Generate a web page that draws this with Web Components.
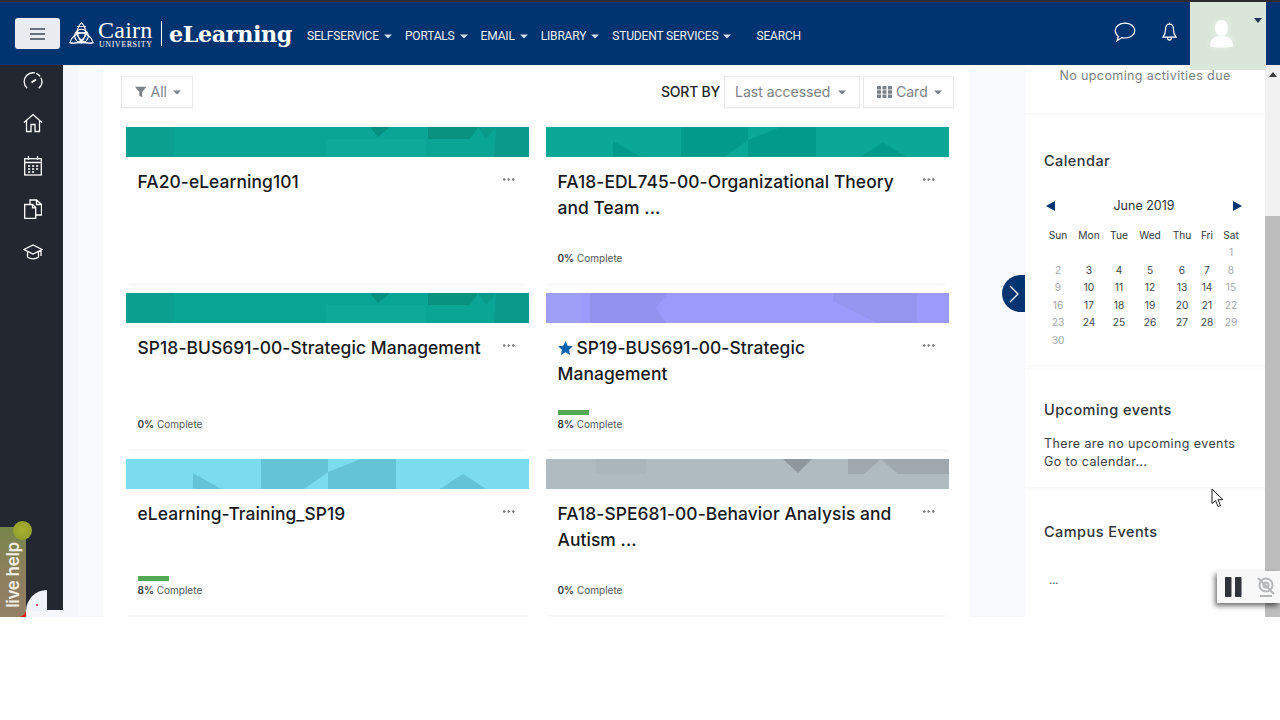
<!DOCTYPE html>
<html lang="en"><head><meta charset="utf-8"><title>Cairn eLearning</title>
<style>
html,body{margin:0;padding:0;background:#fff;font-family:Inter,"Liberation Sans",sans-serif;}
body{width:1280px;height:720px;overflow:hidden;position:relative}
</style></head><body>
<app-shell></app-shell>
<script>
const FONT='Inter,"Liberation Sans",sans-serif';
function def(name,css,html){
  customElements.define(name,class extends HTMLElement{
    connectedCallback(){
      if(this.shadowRoot)return;
      const r=this.attachShadow({mode:'open'});
      r.innerHTML='<style>'+css+'</style>'+(typeof html==='function'?html(this):html);
    }
  });
}
const caret=c=>`<svg width="8" height="5" viewBox="0 0 8 5" style="display:block;flex:none"><path d="M0 .5h8L4 4.5z" fill="${c}"/></svg>`;

def('nav-item',`:host{display:flex;align-items:center;gap:5px;font:400 12px/16px Roboto,sans-serif;color:#eef1f6;white-space:nowrap;letter-spacing:-.17px}`,
 e=>`<slot></slot>${e.hasAttribute('plain')?'':caret('#d5dce8')}`);

def('cairn-logo',`:host{display:flex;align-items:center;color:#fff}
 .cairn{display:flex;flex-direction:column;margin:2px 0 0 4px;width:56px}
 .c{font:400 24px/20px "Liberation Serif",serif;letter-spacing:.25px}
 .u{font:400 8px/8px "Liberation Serif",serif;letter-spacing:.55px;white-space:nowrap;margin:1px 0 0 1px}
 .bar{width:1px;height:25px;background:#fff;margin:0 7px}
 .e{font:700 22.300px/30px "DejaVu Serif",serif;letter-spacing:-.42px}`,
 `<svg width="25" height="24" viewBox="0 0 25 24" fill="none" stroke="#fff" stroke-width="1.100"><circle cx="12.500" cy="14" r="6.800"/><path d="M12.500 .6Q20.500 9 12.500 20.500Q4.500 9 12.500 .6z"/><path d="M12.500 .6Q20.500 9 12.500 20.500Q4.500 9 12.500 .6z" transform="rotate(120 12.500 14)"/><path d="M12.500 .6Q20.500 9 12.500 20.500Q4.500 9 12.500 .6z" transform="rotate(240 12.500 14)"/><path d="M.8 21h23.400M8 4.500h9" stroke-width=".8"/></svg>
 <div class="cairn"><span class="c">Cairn</span><span class="u">UNIVERSITY</span></div><span class="bar"></span><span class="e">eLearning</span>`);

def('top-bar',`:host{display:flex;align-items:center;height:63px;background:#003470;border-top:2px solid #2a2c30;position:relative;flex:none}
 .burger{width:45px;height:31px;margin-left:15px;border-radius:3px;background:#e9edf2;display:flex;align-items:center;justify-content:center}
 cairn-logo{margin-left:9px}
 nav{display:flex;align-items:center;margin:5px 0 0 15px;gap:13px}
 nav-item:last-child{margin-left:12px}
 .r{margin-left:auto;display:flex;align-items:center;gap:26px;margin-right:103px;margin-top:-4px}`,
 `<div class="burger"><svg width="15" height="12" viewBox="0 0 15 12"><path d="M0 1h15M0 6h15M0 11h15" stroke="#3f4a57" stroke-width="1.700"/></svg></div>
 <cairn-logo></cairn-logo>
 <nav><nav-item>SELFSERVICE</nav-item><nav-item>PORTALS</nav-item><nav-item>EMAIL</nav-item><nav-item>LIBRARY</nav-item><nav-item>STUDENT SERVICES</nav-item><nav-item plain>SEARCH</nav-item></nav>
 <div class="r">
 <svg width="22" height="20" viewBox="0 0 22 20" fill="none" stroke="#fff" stroke-width="1.200"><path d="M11 1.200c5.300 0 9.800 3.200 9.800 7.400s-4.500 7.400-9.800 7.400c-1.100 0-2.200-.15-3.200-.4L3 18.800l1.300-4.400C2.400 13 1.200 10.900 1.200 8.600 1.200 4.400 5.700 1.200 11 1.200z"/></svg>
 <svg width="15" height="20" viewBox="0 0 15 20" fill="none" stroke="#fff" stroke-width="1.200"><path d="M7.500 2.200C4.800 2.200 3.600 4.400 3.600 7.200c0 3.600-1 5.800-2.600 8h13c-1.600-2.200-2.600-4.400-2.600-8 0-2.800-1.200-5-3.900-5zM5.600 15.500c0 3.500 3.800 3.500 3.800 0M7.500 .6v1.600"/></svg>
 </div>`);

def('side-rail',`:host{display:flex;flex-direction:column;align-items:center;width:63px;flex:none;height:545px;background:#23272f;box-sizing:border-box;padding:5.500px 0 0 3px;gap:12.500px;align-self:flex-start}
 svg{display:block}`,
 `<svg width="20" height="20" viewBox="0 0 20 20" fill="none" stroke="#fff" stroke-width="1.300"><path d="M4.200 17.200A8.800 8.800 0 1 1 15.800 17.200" stroke-dasharray="23 1.500 5 1.500 30"/><path d="M8.500 11.500l4.500-3" stroke-width="1.800"/></svg>
 <svg style="margin-top:10px" width="20" height="20" viewBox="0 0 20 20" fill="none" stroke="#fff" stroke-width="1.300"><path d="M1 9.500L10 1.500l9 8M3.500 8v10.500h4.500v-7h4v7h4.500V8"/></svg>
 <svg style="margin-top:10.500px" width="18" height="20" viewBox="0 0 18 20" fill="none" stroke="#fff" stroke-width="1.300"><rect x=".7" y="2.700" width="16.600" height="16.300"/><path d="M4.500 0v4M13.500 0v4M.7 6.500h16.600"/><path d="M4 10h2.200M8 10h2.200M12 10h2.200M4 13h2.200M8 13h2.200M12 13h2.200M4 16h2.200M8 16h2.200" stroke-width="1.700"/></svg>
 <svg style="margin-top:10px" width="18" height="20" viewBox="0 0 18 20" fill="none" stroke="#fff" stroke-width="1.300"><path d="M.7 5.500h8l3 3v11h-11zM8.500 5.500v3.300h3.300M6 5.500V1h6.500l5 4.500v10.500h-5.500M12.500 1v4.500h5"/></svg>
 <svg style="margin-top:11.500px" width="20" height="18" viewBox="0 0 20 18" fill="none" stroke="#fff" stroke-width="1.300"><path d="M10 2L1 6.500l9 4.500 9-4.500zM4.500 9v5c3 2.500 8 2.500 11 0V9M18 7v6"/></svg>`);

def('drop-btn',`:host{display:flex;align-items:center;gap:6px;height:32px;box-sizing:border-box;border:1px solid #e8eaee;background:#fff;padding:0 11px 0 13px;color:#7d8289;font:400 14px/20px ${FONT};white-space:nowrap;box-shadow:0 1px 1px rgba(0,0,0,.03)}
 ::slotted(svg){margin-right:-2px}`,
 `<slot></slot>${caret('#7d8289')}`);

const zig=(b,d)=>[b,`<path d="M67 14L95 30H67zM314 30l23-15 23 15z" fill="${d}"/><path d="M135 0h67v13l-24 17h-43zM202 13L235 0h35v30h-68z" fill="${d}"/>`];
const banners={
 teal:['#0aa594',`<path d="M0 0h48v30H0z" fill="#0b9f8f"/><path d="M244 0h20l-12 10z" fill="#078f80"/><path d="M302 0h50l-8 12h-42z" fill="#08927f"/><path d="M352 0h18l-10 12zM370 0h33v30h-35z" fill="#099a8a"/><path d="M200 12h100v18H200z" fill="#0fa999"/>`],
 teal2:zig('#0ba797','#029a8b'),
 purple:['#9c9bfc',`<path d="M44 0h78l-12 15 10 15H44z" fill="#9392ef"/><path d="M287 0h84v30h-40l-44-22z" fill="#9594ef"/><path d="M0 0h35v30H0z" fill="#a09ff8"/>`],
 sky:zig('#7adced','#64c3d4'),
 gray:['#b0bac1',`<path d="M237 0h29l-14 14z" fill="#8f989f"/><path d="M302 0h101v15h-50l-1 0-17-15-17 15h-16z" fill="#9fa8af"/><path d="M50 0h50v15H50z" fill="#abb5bc"/>`]
};
def('course-card',`:host{display:flex;flex-direction:column;height:156px;background:#fff;position:relative;box-shadow:0 5px 5px -3px rgba(30,40,60,.05)}
 svg.b{display:block;width:403px;height:30px;flex:none}
 .body{flex:1;padding:12px 41px 0 11.500px;position:relative;display:flex;flex-direction:column}
 h3{margin:0;font:500 17.400px/26px ${FONT};color:#17181c;letter-spacing:.08px}
 .star{display:inline-block;vertical-align:-1px;margin-right:4px}
 .dots{position:absolute;right:14px;top:20.500px;width:12px;height:3px;background:radial-gradient(circle at 1.250px 1.500px,#808080 1.200px,transparent 1.350px) 0 0/4.500px 3px repeat-x}
 .foot{margin-top:auto;padding-bottom:18px;font:400 10px/14px ${FONT};color:#55585e;position:relative;height:14px;white-space:nowrap}
 .foot b{font-weight:600;color:#33363c}
 .bar{position:absolute;left:0;top:-7px;width:31px;height:5px;background:#53a953}`,
 e=>{const b=banners[e.getAttribute('banner')];const p=e.getAttribute('pct');return `<svg class="b" viewBox="0 0 403 30" preserveAspectRatio="none"><rect width="403" height="30" fill="${b[0]}"/>${b[1]}</svg>
 <div class="body"><h3>${e.hasAttribute('star')?'<svg class="star" width="15" height="14" viewBox="0 0 15 14"><path d="M7.500 0l2.200 4.700 5.200.6-3.800 3.500 1 5.100-4.600-2.600L2.900 13.900l1-5.100L.1 5.300l5.200-.6z" fill="#0a63ae"/></svg>':''}<slot></slot></h3><span class="dots"></span>
 ${p!==null?`<div class="foot">${p!=='0'?'<span class="bar"></span>':''}<b>${p}%</b> Complete</div>`:''}</div>`});

def('course-main',`:host{display:block;width:867px;margin-left:40px;background:#fff;flex:none;height:552px;overflow:hidden;box-sizing:border-box}
 .bar{display:flex;align-items:center;height:32px;margin:11px 16px 0 18px}
 .sp{flex:1}.s{font:500 14px/20px ${FONT};color:#23252a;margin-right:4px;letter-spacing:-.25px}
 .f{width:72px}
 .l{width:136px;padding-left:10px;gap:8px}
 .k{width:91px;margin-left:3px}
 .grid{display:grid;grid-template-columns:403px 403px;column-gap:17px;row-gap:10px;margin:19px 0 0 23px}`,
 `<div class="bar"><drop-btn class="f"><svg width="12" height="12" viewBox="0 0 12 12"><path d="M0 .5h12L7.500 6v5.500L4.500 10V6z" fill="#7d8289"/></svg>All</drop-btn><span class="sp"></span><span class="s">SORT BY</span><drop-btn class="l">Last accessed</drop-btn><drop-btn class="k"><svg width="15" height="12" viewBox="0 0 15 12"><path d="M0 0h4v3.400H0zM5.500 0h4v3.400h-4zM11 0h4v3.400h-4zM0 4.300h4v3.400H0zM5.500 4.300h4v3.400h-4zM11 4.300h4v3.400h-4zM0 8.600h4V12H0zM5.500 8.600h4V12h-4zM11 8.600h4V12h-4z" fill="#7d8289"/></svg>Card</drop-btn></div>
 <div class="grid">
 <course-card banner="teal">FA20-eLearning101</course-card>
 <course-card banner="teal2" pct="0">FA18-EDL745-00-Organizational Theory and Team ...</course-card>
 <course-card banner="teal" pct="0">SP18-BUS691-00-Strategic Management</course-card>
 <course-card banner="purple" star pct="8">SP19-BUS691-00-Strategic Management</course-card>
 <course-card banner="sky" pct="8">eLearning-Training_SP19</course-card>
 <course-card banner="gray" pct="0">FA18-SPE681-00-Behavior Analysis and Autism ...</course-card>
 </div>`);

const cal=[['','','','','','','1'],['2','3','4','5','6','7','8'],['9','10','11','12','13','14','15'],['16','17','18','19','20','21','22'],['23','24','25','26','27','28','29'],['30','','','','','','']];
const colW=[28,34,26,36,28,22,26];
def('mini-calendar',`:host{display:block}
 .t{display:flex;align-items:center;justify-content:space-between;height:20px;padding:0 4px 0 2px;font:400 12.500px/20px ${FONT};color:#30343a}
 table{border-collapse:collapse;margin:11px 0 0 0;width:200px;table-layout:fixed}
 th{font:400 10.200px/17px ${FONT};color:#34383e;padding:0;overflow:visible}
 td{font:400 10.200px/17.500px ${FONT};color:#44484f;text-align:center;padding:0}
 .m{color:#a8abb0}`,
 `<div class="t"><svg width="9" height="10" viewBox="0 0 9 10"><path d="M9 0v10L0 5z" fill="#003470"/></svg><span>June 2019</span><svg width="9" height="10" viewBox="0 0 9 10"><path d="M0 0v10l9-5z" fill="#003470"/></svg></div>
 <table><colgroup>${colW.map(w=>`<col style="width:${w}px">`).join('')}</colgroup><tr>${['Sun','Mon','Tue','Wed','Thu','Fri','Sat'].map(d=>`<th>${d}</th>`).join('')}</tr>
 ${cal.map(r=>'<tr>'+r.map((d,i)=>`<td class="${i==0||i==6?'m':''}">${d}</td>`).join('')+'</tr>').join('')}</table>`);

def('side-block',`:host{display:block;background:linear-gradient(#fafafb,#fdfdfd) left bottom/100% 5px no-repeat #fff}
 h4{margin:0;font:500 14.500px/20px ${FONT};color:#2f3339;letter-spacing:.45px}`,
 e=>(e.getAttribute('heading')?`<h4>${e.getAttribute('heading')}</h4>`:'')+'<slot></slot>');

def('right-col',`:host{display:flex;flex-direction:column;width:240px;margin-left:55px;flex:none;height:552px;overflow:hidden}
 side-block{padding:0 19px;box-sizing:border-box;flex:none}
 .a{height:53px;text-align:center;font:400 12.500px/20px ${FONT};color:#7d8187;padding-top:1px;letter-spacing:.4px;white-space:nowrap}
 .b{height:252px;padding-top:33px}
 .c{height:122px;padding-top:30px}
 .txt{font:400 12.500px/18px ${FONT};color:#3c4047;margin-top:15px;letter-spacing:.4px;white-space:nowrap}
 .d{padding-top:30px;flex:1;background:#fff}
 .dots{font:400 11px/14px ${FONT};margin:31px 0 0 5px;color:#444}`,
 `<side-block class="a">No upcoming activities due</side-block>
 <side-block class="b" heading="Calendar"><div style="height:25px"></div><mini-calendar></mini-calendar></side-block>
 <side-block class="c" heading="Upcoming events"><div class="txt">There are no upcoming events<br>Go to calendar...</div></side-block>
 <side-block class="d" heading="Campus Events"><div class="dots">...</div></side-block>`);

def('scroll-track',`:host{display:flex;flex-direction:column;align-items:center;width:15px;height:552px;background:#f1f1f1;flex:none;margin-left:auto}
 .u{height:18px;display:flex;align-items:center;justify-content:center}
 .th{width:15px;height:401px;background:#bdbdbd;margin-top:133px}`,
 `<div class="u"><svg width="8" height="5" viewBox="0 0 8 5"><path d="M0 5h8L4 0z" fill="#3c3c3c"/></svg></div><div class="th"></div>`);

def('live-help',`:host{display:block;position:absolute;left:0;top:521px;width:47px;height:96px;pointer-events:none}
 .pie{position:absolute;left:26px;top:69px;width:21px;height:21px;background:#f0f2fa;border-radius:100% 0 0 0}
 .pie i{position:absolute;left:10px;top:14px;width:2px;height:2px;border-radius:50%;background:#d03040}
 .red{position:absolute;left:19px;top:90px;width:7px;height:6px;background:#d3211f;clip-path:polygon(100% 0,100% 100%,0 100%)}
 .tab{position:absolute;left:0;top:6px;width:26px;height:90px;background:linear-gradient(180deg,#76864a,#8d7f5c 50%,#938068);border-radius:0 0 8px 0;display:flex;align-items:center;justify-content:center}
 .tab span{transform:translateY(3px) rotate(-90deg);font:600 17px/20px ${FONT};color:#f5f0e6;white-space:nowrap;letter-spacing:-.3px}
 .ball{position:absolute;left:13px;top:0;width:19px;height:19px;border-radius:50%;background:radial-gradient(circle at 50% 45%,#a8b02e,#8c9a2c)}`,
 `<div class="pie"><i></i></div><div class="red"></div><div class="tab"><span>live help</span></div><div class="ball"></div>`);

def('rec-widget',`:host{display:flex;position:absolute;left:1217px;top:571px;width:63px;height:32px;background:#f8f8f8;box-shadow:-2px 3px 5px rgba(0,0,0,.55);align-items:center;gap:15px;padding-left:8px;box-sizing:border-box}`,
 `<svg width="17" height="20" viewBox="0 0 17 20"><rect width="6.500" height="20" rx="1" fill="#30343a"/><rect x="10" width="6.500" height="20" rx="1" fill="#30343a"/></svg>
 <svg width="18" height="20" viewBox="0 0 18 20" fill="none" stroke="#b4b6b8" stroke-width="2"><circle cx="9" cy="8" r="6.500"/><circle cx="9" cy="8" r="2.500"/><path d="M1 1l16 16M3 19h12"/></svg>`);

def('app-shell',`:host{display:block;width:1280px;height:720px;position:relative;overflow:hidden;background:#fff}
 .page{display:flex;flex-direction:column;height:617px}
 .row{display:flex;height:552px;background:linear-gradient(90deg,#f5f7fc 0,#f5f7fc 78px,#f9fafd 78px);flex:none}
 .avatar{position:absolute;left:1190px;top:2px;width:76px;height:68px;background:#d9e6d9}
 .avatar svg.u{position:absolute;left:19px;top:17px;filter:blur(.5px) drop-shadow(0 0 3px rgba(255,255,255,.5))}
 .avatar svg.c{position:absolute;right:4px;top:16px}
 .collapse{position:absolute;left:1002px;top:275px;width:23px;height:37px;background:#003470;border-radius:19px 0 0 19px;display:flex;align-items:center;justify-content:center}
 .cursor{position:absolute;left:1211px;top:488px}`,
 `<div class="page"><top-bar></top-bar><div class="row"><side-rail></side-rail><course-main></course-main><right-col></right-col><scroll-track></scroll-track></div></div>
 <div class="avatar"><svg class="u" width="24" height="30" viewBox="0 0 24 30"><ellipse cx="12.500" cy="9" rx="6.500" ry="8" fill="#fff"/><path d="M1 27c0-7 5-10 11.500-10S24 20 24 27c0 2-23 2-23 0z" fill="#fff"/></svg><svg class="c" width="8" height="5" viewBox="0 0 8 5"><path d="M0 0h8L4 5z" fill="#1e3557"/></svg></div>
 <div class="collapse"><svg width="10" height="18" viewBox="0 0 10 18" fill="none" stroke="#fff" stroke-width="1.400"><path d="M1 1l8 8-8 8"/></svg></div>
 <live-help></live-help><rec-widget></rec-widget>
 <svg class="cursor" width="14" height="20" viewBox="0 0 14 20"><path d="M1 1v14.500l3.500-3 2.500 6 2.500-1-2.500-5.800H12z" fill="#fff" stroke="#222" stroke-width="1"/></svg>`);
</script>
</body></html>
